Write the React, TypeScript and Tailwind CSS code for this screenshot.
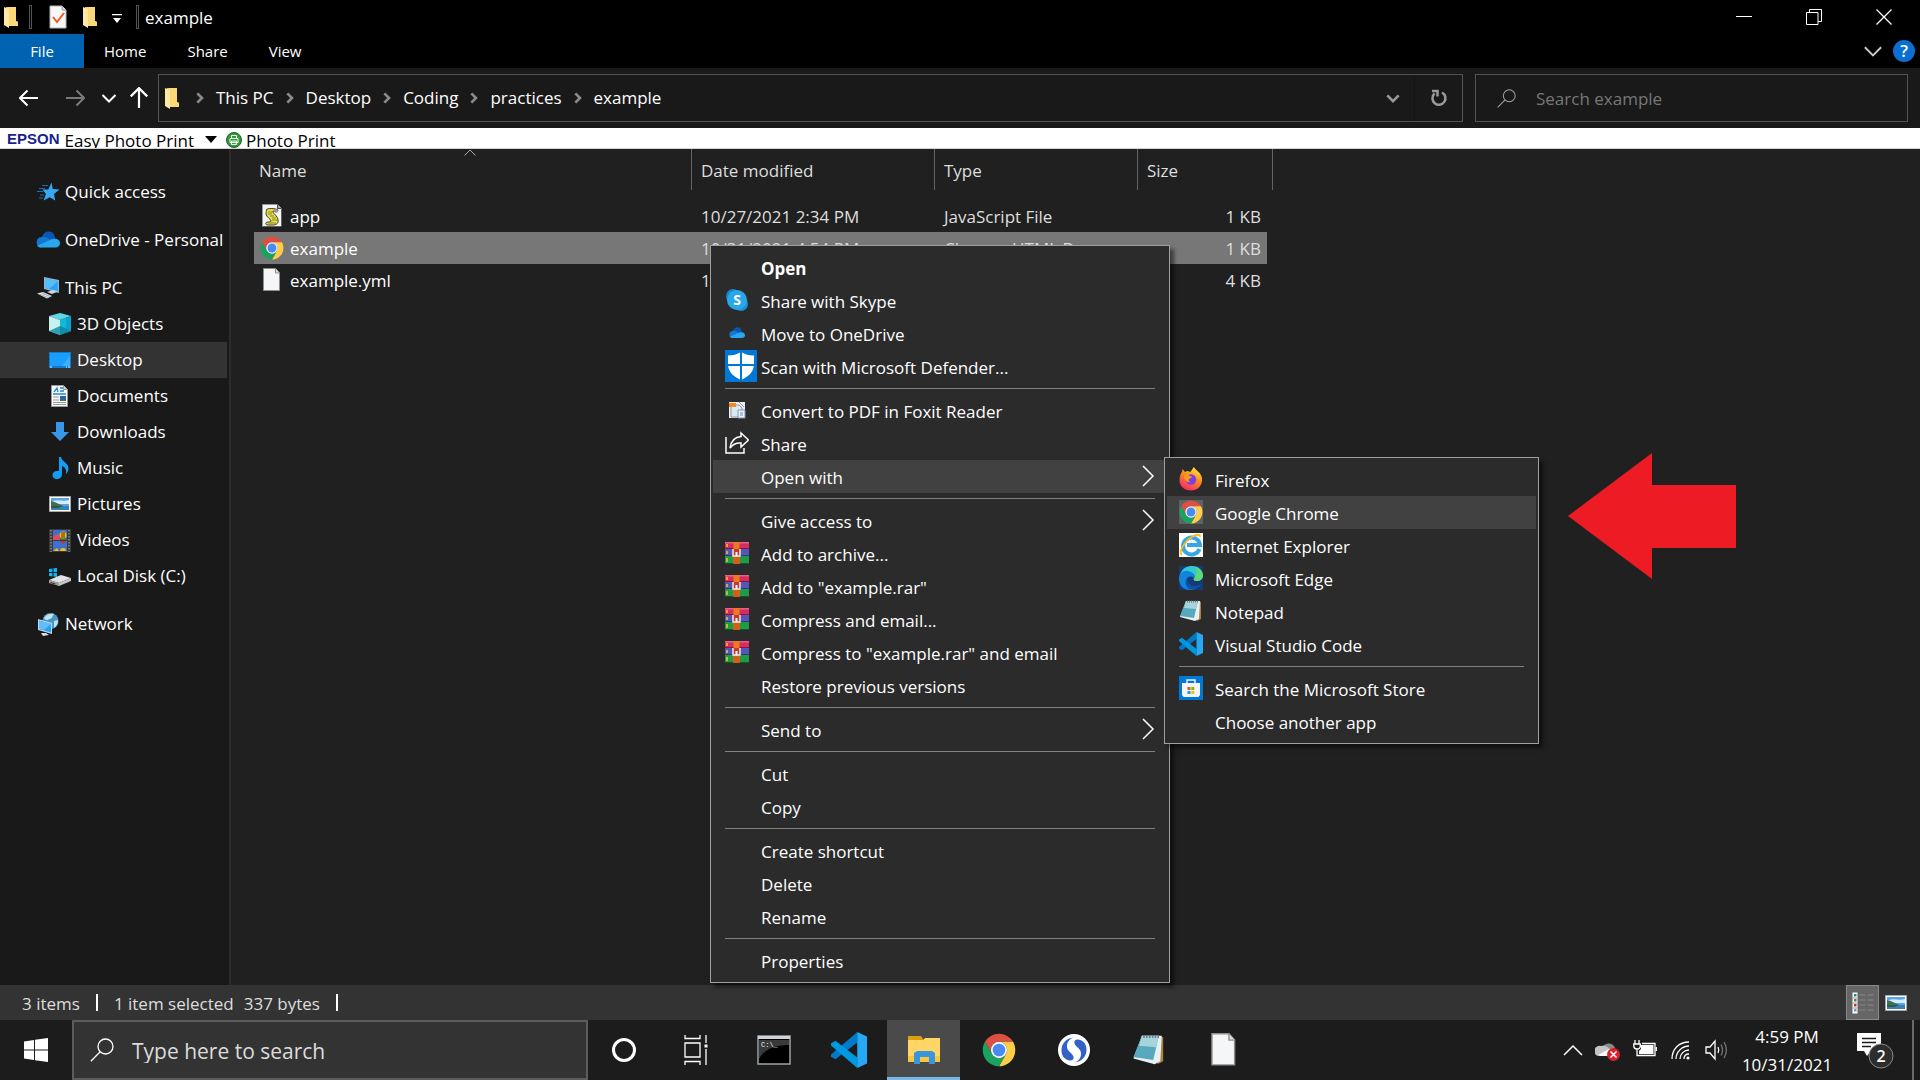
import { ReactNode } from 'react'

type IconProps = { className?: string }

// ---------- Icons ----------

const FolderThin = ({ className = 'w-4 h-6' }: IconProps) => (
  <svg viewBox="0 0 16 24" className={className}>
    <path d="M3 2h10v14l2 1v4H5z" fill="#f3c65b" />
    <path d="M5 2h8v14l2 1v4H5z" fill="#fbd877" />
    <path d="M1 2l5 2v19l-5-3z" fill="#ffe9a3" />
  </svg>
)

const CheckDoc = () => (
  <svg viewBox="0 0 18 24" className="w-[18px] h-6">
    <path d="M1 1h12l4 4v18H1z" fill="#f7f7f7" stroke="#b5b5b5" />
    <path d="M13 1v4h4" fill="#ddd" stroke="#999" />
    <path d="M4 12l4 5 7-9" fill="none" stroke="#f0591a" strokeWidth="2" />
  </svg>
)

const Chevron = ({ className = 'w-3 h-3' }: IconProps) => (
  <svg viewBox="0 0 12 12" className={className} fill="none" stroke="currentColor">
    <path d="M4 2.500L7.500 6 4 9.500" />
  </svg>
)

const ChevronDown = ({ className = 'w-4 h-4' }: IconProps) => (
  <svg viewBox="0 0 16 16" className={className} fill="none" stroke="currentColor">
    <path d="M1.500 5l6.500 6.500L14.500 5" />
  </svg>
)

const Magnifier = ({ className = 'w-6 h-6' }: IconProps) => (
  <svg viewBox="0 0 24 24" className={className} fill="none" stroke="currentColor" strokeWidth="1.300">
    <circle cx="15.500" cy="8.500" r="7.500" />
    <path d="M10.200 13.800L.8 23.200" />
  </svg>
)

const Arrow = ({ className }: IconProps) => (
  <svg viewBox="0 0 20 20" className={className} fill="none" stroke="currentColor" strokeWidth="2">
    <path d="M1 10h18M8.500 2.500L1 10l7.500 7.500" />
  </svg>
)

const Printer = () => (
  <svg viewBox="0 0 16 16" className="w-4 h-4">
    <circle cx="8" cy="8" r="7.500" fill="#2f9b3a" stroke="#1d5f26" />
    <path d="M5.500 6V3.500h5V6M4 6.500h8v4h-8zM5.500 9h5v3.500h-5z" fill="none" stroke="#fff" />
  </svg>
)

const Star = () => (
  <svg viewBox="0 0 24 24" className="w-6 h-6">
    <path d="M6 5.500h6M3 8.500h6M1 11.500h6M4 15h4M3 18h4" stroke="#1b6fb5" />
    <path d="M15.500 2.500l1.200 6.500 6.800.5-5.500 4.500 1.200 6.500-5.500-3.200-6.200 3.200 2.500-6.500-3.500-4.500h5.800z" fill="#35a9f4" />
  </svg>
)

const OneDrive = ({ className = 'w-6 h-6' }: IconProps) => (
  <svg viewBox="0 0 24 24" className={className}>
    <path d="M6 9a6.500 6.500 0 0 1 13 2l-5 4z" fill="#0a57b2" />
    <path d="M5.500 9c3-1 5.500.3 7 1.500l6 4L5 19.500A5.300 5.300 0 0 1 5.500 9z" fill="#0f78d4" />
    <path d="M18.500 10.800c3.500 0 5.500 2 5.500 4.500S22 19.500 19.500 19.500H5c-1.600 0-3-.8-3.900-1.800L13 12.500c1.500-1 3.500-1.700 5.500-1.700z" fill="#29a7ea" />
  </svg>
)

const ThisPC = () => (
  <svg viewBox="0 0 24 24" className="w-6 h-6">
    <path d="M8 1l15 3v13L8 13z" fill="#8fb8cf" />
    <path d="M9 2.500l13 2.500v10.500L9 12z" fill="#2fa4f5" />
    <path d="M9 2.500l13 2.500-9 8L9 12z" fill="#58bcfa" />
    <path d="M11 16l6-2 5 1.500-6 2.500z" fill="#cfd6da" />
    <path d="M1 17.500l6-1.500 9 4-5 2.500z" fill="#dfe5e8" />
    <path d="M3 18l9 3.500M6 17l8 3.500" stroke="#87939b" strokeWidth=".7" />
  </svg>
)

const Cube = () => (
  <svg viewBox="0 0 24 24" className="w-6 h-6">
    <path d="M1 4l11-3 11 3-11 4z" fill="#5fd6e4" />
    <path d="M1 4l11 4v15L1 19z" fill="#c8f2f1" />
    <path d="M23 4L12 8v15l11-4z" fill="#0ea0cf" />
    <path d="M1 19l11-5 11 5-11 4z" fill="#0c8ba0" opacity=".8" />
    <path d="M12 8l6-2v10l-6-2z" fill="#17b8d6" />
  </svg>
)

const Monitor = () => (
  <svg viewBox="0 0 24 24" className="w-6 h-6">
    <path d="M1 4h22v16H1z" fill="#0f7ccc" />
    <path d="M2 5h20v13H2z" fill="#1a9dfb" />
    <path d="M14 18l8-10v10z" fill="#3fb0ff" />
    <path d="M2 19h2M18 19h1M20 19h2" stroke="#dff1ff" />
  </svg>
)

const DocIcon = () => (
  <svg viewBox="0 0 24 24" className="w-6 h-6">
    <path d="M3.500 1.500h12l4 4v17h-16z" fill="#fafafa" stroke="#999" />
    <path d="M15.500 1.500v4h4" fill="#ccc" stroke="#999" />
    <path d="M6 8l3-4 1 4M5 10h13M12 4h3M12 7h4" stroke="#2189d4" strokeWidth="1.300" fill="none" />
    <path d="M5 13h6M5 16h6M5 18.500h13M5 20.500h13" stroke="#999" />
    <path d="M12 12h6v5h-6z" fill="#2c64a8" />
    <path d="M12 17l3-2 3 1v1z" fill="#3c7d4a" />
  </svg>
)

const DownIcon = () => (
  <svg viewBox="0 0 24 24" className="w-6 h-6">
    <path d="M8 2h8v10h5l-9 9-9-9h5z" fill="#3a97e8" />
  </svg>
)

const MusicIcon = () => (
  <svg viewBox="0 0 24 24" className="w-6 h-6">
    <path d="M11 1h2c.5 4 7.500 6 7.500 11 0 3-1 4-2.500 6 .8-4-1-7-4-8v8c0 3-2 5-5 5s-4.500-1.500-4.500-4c0-3 3-4.500 6.500-4z" fill="#139df5" />
  </svg>
)

const PictureIcon = ({ className = 'w-6 h-6' }: IconProps) => (
  <svg viewBox="0 0 24 24" className={className}>
    <path d="M1.500 4.500h21v15h-21z" fill="#fff" stroke="#a9a9a9" />
    <path d="M3 6h18v12H3z" fill="#5aa5ea" />
    <path d="M5 9c5-2 10 1 16-1v4H3v-2z" fill="#d5ecfb" />
    <path d="M3 9c5 1 9 4 13 5H3z" fill="#3d7052" />
    <path d="M3 14h18v4H3z" fill="#3b7fb5" />
    <path d="M3 14h12l-5 2H3z" fill="#2d5a49" />
  </svg>
)

const VideoIcon = () => (
  <svg viewBox="0 0 24 24" className="w-6 h-6">
    <path d="M1 1h22v23H1z" fill="#3a3a3a" />
    <path d="M3 2v22M21 2v22" stroke="#8b8b8b" strokeWidth="1.500" strokeDasharray="1.500 1.500" />
    <path d="M5 2h14v10H5zM5 13h14v10H5z" fill="#3e6fd2" />
    <path d="M5 8l5-2 3 5v1H5z" fill="#de4b5a" />
    <path d="M12 10h7v2h-7z" fill="#2e7b3b" />
    <circle cx="15" cy="7" r="3.500" fill="#f0bd1b" />
    <path d="M14 4v6M16 4v6" stroke="#5c2b12" />
    <path d="M12 13h6l-3 3z" fill="#c9302c" />
    <path d="M5 23l4-3 2 3zM12 23a3 3 0 0 1 6 0z" fill="#f0bd1b" />
  </svg>
)

const DiskIcon = () => (
  <svg viewBox="0 0 24 24" className="w-6 h-6">
    <path d="M1 5l3.500-.5V8H1zM5.500 4.300L9 4v4H5.500zM1 9h3.500v3.500L1 12zM5.500 9H9v4l-3.500-.4z" fill="#13b3f5" />
    <path d="M1 16l12-5 10 3-12 5z" fill="#e3e3e6" />
    <path d="M1 16l10 3v3L1 19z" fill="#a5a5a9" />
    <path d="M23 14l-12 5v3l12-5z" fill="#c6c6ca" />
    <path d="M2.500 18l5 1.500v1l-5-1.500z" fill="#2d2d2d" />
    <path d="M8 20l1.500.4" stroke="#3bd14b" strokeWidth="1.500" />
  </svg>
)

const NetworkIcon = () => (
  <svg viewBox="0 0 24 24" className="w-6 h-6">
    <circle cx="14.500" cy="9" r="8" fill="#4b95bd" />
    <path d="M8 6c2-4 7-5 10-4-2 2-1 4-4 5s-4 2-6-1zM18 9l4-1c0 4-1 6-4 8z" fill="#bfe3f0" />
    <path d="M2 7l14 4v11L2 18z" fill="#b6dcf2" />
    <path d="M3 8.500l12 3.500v8.500L3 17z" fill="#2d9ff0" />
    <path d="M3 8.500l12 3.500-7 6-5-1z" fill="#63bdfa" />
    <path d="M5 21l5 0 3 2-6 1z" fill="#d7dcdf" />
  </svg>
)

const ScriptIcon = () => (
  <svg viewBox="0 0 24 24" className="w-6 h-6">
    <path d="M2.500.5h15l4 4v18h-19z" fill="#f6f6f6" stroke="#999" />
    <path d="M17.500.5v4h4" fill="#aaa" stroke="#444" />
    <path d="M22 5v18H3" fill="none" stroke="#222" />
    <path
      d="M6 6c1-2 9-2 12 0 0 2-2 2-5 1-1 2 5 5 5 9 1 4-3 5-5 5H8c-3 0-3-3 0-3 2 0 3 0 3-1 0-2-5-4-5-7 0-2 1-3 0-4z"
      fill="#e6df4a"
      stroke="#3c3a1d"
    />
    <path d="M8 8h4M8 10h4M10 12h4M12 14h4M12 16h5M8 19h8" stroke="#8b872f" />
    <path d="M14 5l4 1-1 3-3-1z" fill="#999" />
  </svg>
)

const BlankFile = ({ className = 'w-6 h-6' }: IconProps) => (
  <svg viewBox="0 0 24 24" className={className}>
    <path d="M3.500.5h12l4 4.500v17.500h-16z" fill="#f5f6f7" stroke="#8e8e8e" />
    <path d="M15.500.5V5h4" fill="#ddd" stroke="#8e8e8e" />
  </svg>
)

const Chrome = ({ className = 'w-6 h-6' }: IconProps) => (
  <svg viewBox="1 1 46 46" className={className}>
    <path d="M24 13H43.050A22 22 0 0 0 4.950 13L14.470 29.500A11 11 0 0 1 24 13Z" fill="#dd4f43" />
    <path d="M33.530 29.500L24 46A22 22 0 0 0 43.050 13H24A11 11 0 0 1 33.530 29.500Z" fill="#ffcd46" />
    <path d="M14.470 29.500L4.950 13A22 22 0 0 0 24 46L33.530 29.500A11 11 0 0 1 14.470 29.500Z" fill="#1aa260" />
    <circle cx="24" cy="24" r="11" fill="#f4f4f4" />
    <circle cx="24" cy="24" r="8.500" fill="#4a8af4" />
  </svg>
)

const Skype = () => (
  <svg viewBox="0 0 24 24" className="w-6 h-6">
    <circle cx="8" cy="8" r="7" fill="#1686d0" />
    <circle cx="16" cy="16" r="7" fill="#1a8fd8" />
    <circle cx="12" cy="12" r="10" fill="#28a8ea" />
    <text x="12" y="17" textAnchor="middle" fontSize="14" fontWeight="700" fill="#fff">S</text>
  </svg>
)

const Defender = () => (
  <svg viewBox="0 0 32 32" className="w-8 h-8">
    <path d="M0 0h32v32H0z" fill="#0078d7" />
    <path d="M16 2c4 2.500 8 3.500 13 3.500V14c0 8-6 13-13 16C9 27 3 22 3 14V5.500C8 5.500 12 4.500 16 2z" fill="#fff" />
    <path d="M16 2v28M3 15h26" stroke="#0078d7" strokeWidth="2" />
  </svg>
)

const Foxit = () => (
  <svg viewBox="0 0 24 24" className="w-6 h-6">
    <path d="M4 4h16v16H4z" fill="#e9eef4" />
    <path d="M6 7h8l3 3v9H6z" fill="#dbe9f7" stroke="#8b96a3" />
    <path d="M4 5h7v4H4z" fill="#f08a1c" />
    <path d="M13 12h7v8h-7z" fill="#eaf2fb" stroke="#8796a8" />
    <path d="M15 15h3M15 17h3" stroke="#5f8fc4" />
    <path d="M14 4l5 5" stroke="#8b96a3" />
  </svg>
)

const ShareIcon = () => (
  <svg viewBox="0 0 24 24" className="w-6 h-6" fill="none" stroke="#fff" strokeWidth="1.500">
    <path d="M1 6v16h18v-5" />
    <path d="M16 2l7.500 7L16 16v-4c-5-.5-8 1-11 5 1-7 5-11 11-11.500z" />
  </svg>
)

const WinRar = () => (
  <svg viewBox="0 0 24 24" className="w-6 h-6">
    <path d="M0 1h24v7H0z" fill="#d62d5e" />
    <path d="M0 1h24v1.500H0z" fill="#ea5f86" />
    <path d="M0 7h24v1H0z" fill="#8c1439" />
    <path d="M0 8h24v7H0z" fill="#5357b8" />
    <path d="M0 14h24v1H0z" fill="#333686" />
    <path d="M0 15h24v8H0z" fill="#1f9b46" />
    <path d="M0 22h24v1H0z" fill="#0f5a26" />
    <path d="M2 3v3M2 10v3M2 17v4" stroke="#f3c62c" strokeWidth="1.500" />
    <path d="M8.500 1h6v22h-6z" fill="#ec7a1f" />
    <path d="M8.500 16h6v7h-6z" fill="#d85c14" />
    <path d="M8 8v7h7V8" fill="#c63a2a" stroke="#e9e9e9" strokeWidth="1.500" />
    <path d="M10.500 11h2v4h-2z" fill="#fff" />
  </svg>
)

const Firefox = () => (
  <svg viewBox="0 0 24 24" className="w-6 h-6">
    <defs>
      <linearGradient id="ff" x1="0.800" y1="0" x2="0.300" y2="1">
        <stop offset="0" stopColor="#fff044" />
        <stop offset=".45" stopColor="#ff8c1a" />
        <stop offset="1" stopColor="#f5286a" />
      </linearGradient>
    </defs>
    <path d="M15 0c1 3 7 5 8 11 .8 7-4 12.500-11 12.500S.5 19 .5 13C.5 9 2 6 3 5l.5-3L6 5c1-.7 2-1 3-1 1 0 1 1 2 1s2-3 4-5z" fill="url(#ff)" />
    <circle cx="12" cy="12.500" r="5.200" fill="#7a3fe0" />
    <path d="M5 8c2-1 4-.5 5 .5s3 .5 3 1.500-2 1-3 2 0 3 2 3c-4 1-7-2-7-7z" fill="#ff9a1f" />
  </svg>
)

const InternetExplorer = () => (
  <svg viewBox="0 0 24 24" className="w-6 h-6">
    <path d="M0 0h24v24H0z" fill="#fff" />
    <path d="M20.500 16a8.500 8.500 0 1 1 .5-4H8" fill="none" stroke="#35a7e6" strokeWidth="4" />
    <path d="M3 22c-4-3 3-14 10-18 5-3 8-3 8 0" fill="none" stroke="#f4bd22" strokeWidth="1.800" />
  </svg>
)

const Edge = () => (
  <svg viewBox="0 0 24 24" className="w-6 h-6">
    <path d="M0 0h24v24H0z" fill="#163a78" />
    <path d="M1 9C3 2 8 0 13 0c7 0 11 5 11 9.500 0 3.500-3 5.500-6 5.500s-4-1-3-2.500 1-5-4-6S3 6 1 9z" fill="#35c6d6" />
    <path d="M16 1c5 1 8 5 8 8.500 0 3.500-3 5.500-6 5.500s-4-1-3-2.500c3-3 4-7 1-11.500z" fill="#5cdb72" />
    <path d="M0 12c0-5 5-8 9-7 5 .8 7 4 5.500 7C10 8 6 13 9 18c2 3 6 4 9 3.500-2 2-5 2.500-7 2.500C4 24 0 19 0 12z" fill="#1184dc" />
    <path d="M9.500 10c-3 4 0 9 5 10 4 .5 7-1.500 8-2.500-2 4-6 6.500-11 6C6 22 5 14 9.500 10z" fill="#0d52a0" />
  </svg>
)

const Notepad = ({ className = 'w-6 h-6' }: IconProps) => (
  <svg viewBox="0 0 24 24" className={className}>
    <path d="M19 2l3 1v17l-4 2z" fill="#a9823c" />
    <path d="M7 2h14l-1 18-4 2-15-4z" fill="#e7f1f3" />
    <path d="M7 2h12l-4 17L1 17z" fill="#58a9bd" />
    <path d="M7 2h12l-2 8-12-1z" fill="#a6d4dd" />
    <path d="M8 2.500h12" stroke="#6e777a" strokeWidth="2" strokeDasharray="1 1" />
  </svg>
)

const VSCode = ({ className = 'w-6 h-6' }: IconProps) => (
  <svg viewBox="0 0 24 24" className={className}>
    <path d="M17.500 0v7L3 18.200 0 16.500V15z" fill="#0179cb" />
    <path d="M17.500 24v-7L3 5.800 0 7.500V9z" fill="#0098e0" />
    <path d="M17.500 0L24 3v18l-6.500 3z" fill="#26a9f4" />
  </svg>
)

const Store = () => (
  <svg viewBox="0 0 24 24" className="w-6 h-6">
    <path d="M0 0h24v24H0z" fill="#0078d7" />
    <path d="M8 7V4h8v3" fill="none" stroke="#eaf3fb" strokeWidth="1.500" />
    <path d="M3 7h18v12l-1.500 2h-15L3 19z" fill="#f5f5f5" />
    <path d="M8.500 11h3v3h-3z" fill="#f25022" />
    <path d="M12.300 11h3v3h-3z" fill="#7fba00" />
    <path d="M8.500 15h3v3h-3z" fill="#00a4ef" />
    <path d="M12.300 15h3v3h-3z" fill="#ffb900" />
  </svg>
)

const WindowsLogo = () => (
  <svg viewBox="0 0 24 24" className="w-6 h-6">
    <path d="M0 3.400L10 2v9.500H0zM11 1.800L24 0v11.500H11zM0 12.500h10V22L0 20.600zM11 12.500h13V24l-13-1.800z" fill="#fff" />
  </svg>
)

const TaskView = () => (
  <svg viewBox="0 0 24 30" className="w-6 h-[30px]" fill="none" stroke="#fff" strokeWidth="1.300">
    <path d="M1 0v3.500h15V0M1 30v-3.500h15V30M1 8h15v14H1zM22 0v8M22 14v16" />
    <path d="M20.500 9.500h3v3h-3z" fill="#fff" stroke="none" />
  </svg>
)

const Cmd = () => (
  <svg viewBox="0 0 34 30" className="w-[34px] h-[30px]">
    <path d="M1 1h32v28H1z" fill="#000" stroke="#9aa3a8" strokeWidth="1.500" />
    <path d="M1 1h32v3H1z" fill="#cdd5d9" />
    <path d="M2 5h30v5C15 10 6 16 2 24z" fill="#3a3a3a" />
    <text x="4" y="12" fontSize="7" fill="#eee" fontFamily="Liberation Mono">C:\_</text>
  </svg>
)

const Explorer = () => (
  <svg viewBox="0 0 34 28" className="w-[34px] h-7">
    <path d="M1 0h13l2 3v3H1z" fill="#dd9f10" />
    <path d="M1 4h15l2-2h15v24H1z" fill="#ffd565" />
    <path d="M1 20h32v6H1z" fill="#f9c640" />
    <path d="M7 28V17l3-2h15l3 2v11h-6v-7h-9v7z" fill="#3a95df" />
  </svg>
)

const SApp = () => (
  <svg viewBox="0 0 34 34" className="w-[34px] h-[34px]">
    <circle cx="17" cy="17" r="16" fill="#fff" />
    <path d="M17 4.500C9 5 4.500 11 4.500 17c0 5 2 8 5 9.500 4 2 8 1 7-3-1.500-4-7-5-6.500-11 .3-4 3-7 7-8z" fill="#3461c9" />
    <path d="M17 29.500c8-.5 12.500-6.500 12.500-12.500 0-5-2-8-5-9.500-4-2-8-1-7 3 1.500 4 7 5 6.500 11-.3 4-3 7-7 8z" fill="#3461c9" />
  </svg>
)

const TrayCloud = () => (
  <svg viewBox="0 0 26 24" className="w-[26px] h-6">
    <path d="M8 8a7 7 0 0 1 12 2l-8 5z" fill="#8a8a8a" />
    <path d="M6 8c5-1 7 2 12 5L3 18a5.200 5.200 0 0 1 3-10z" fill="#c4c4c4" />
    <path d="M3 17l9-5c4-2 10 1 10 6H5z" fill="#fff" />
    <circle cx="18.500" cy="16.500" r="6.500" fill="#d8232f" />
    <path d="M15.500 13.500l6 6M21.500 13.500l-6 6" stroke="#fff" strokeWidth="1.500" />
  </svg>
)

const Battery = () => (
  <svg viewBox="0 0 24 24" className="w-6 h-6" fill="none" stroke="#fff" strokeWidth="1.300">
    <path d="M9 5.500h13v12H4v-6" />
    <path d="M8 7h12.500v9H6v-3l2-2z" fill="#fff" stroke="none" />
    <path d="M23.300 9v4M2 2v4M6 2v4M.8 6h6.500v2c0 2-1 3-3.300 3S.8 10 .8 8z" />
  </svg>
)

const Wifi = () => (
  <svg viewBox="0 0 24 24" className="w-6 h-6" fill="none" stroke="#fff" strokeWidth="1.300">
    <path d="M3 21C3 11 10 4 20 4M7 21c0-7 6-13 13-13M11 21c0-5 4-9 9-9M15 21c0-3 2-5 5-5" />
    <circle cx="19" cy="20" r="1.600" fill="#fff" stroke="none" />
  </svg>
)

const Volume = () => (
  <svg viewBox="0 0 24 24" className="w-6 h-6" fill="none" stroke="#fff" strokeWidth="1.300">
    <path d="M1 9h4l5-6v18l-5-6H1z" />
    <path d="M13 9c1 2 1 4 0 6" />
    <path d="M16 6.500c2 3.500 2 7.500 0 11M19 4c3 5 3 11 0 16" stroke="#777" />
  </svg>
)

const Notification = () => (
  <svg viewBox="0 0 38 38" className="w-[38px] h-[38px]">
    <path d="M0 2h24v18H14l-4 5-3-5H0z" fill="#fff" />
    <path d="M5 7.500h14M5 11.500h14M5 15.500h9" stroke="#1b1b1b" strokeWidth="1.300" />
    <circle cx="24" cy="25" r="12" fill="#2d2d2d" stroke="#8a8a8a" />
    <text x="24" y="31" textAnchor="middle" fontSize="16" fontWeight="600" fill="#fff">2</text>
  </svg>
)

// ---------- Data ----------

const tabs = ['Home', 'Share', 'View']
const crumbs = ['This PC', 'Desktop', 'Coding', 'practices', 'example']

const places = [
  { icon: Cube, label: '3D Objects' },
  { icon: Monitor, label: 'Desktop', active: true },
  { icon: DocIcon, label: 'Documents' },
  { icon: DownIcon, label: 'Downloads' },
  { icon: MusicIcon, label: 'Music' },
  { icon: PictureIcon, label: 'Pictures' },
  { icon: VideoIcon, label: 'Videos' },
  { icon: DiskIcon, label: 'Local Disk (C:)' },
]

const files = [
  { icon: ScriptIcon, name: 'app', date: '10/27/2021 2:34 PM', type: 'JavaScript File', size: '1 KB' },
  { icon: Chrome, name: 'example', date: '10/31/2021 4:54 PM', type: 'Chrome HTML Do...', size: '1 KB', selected: true },
  { icon: BlankFile, name: 'example.yml', date: '10/31/2021 4:54 PM', type: 'YML File', size: '4 KB' },
]

type Entry = {
  label: string
  icon?: (props: IconProps) => ReactNode
  bold?: boolean
  active?: boolean
  submenu?: boolean
}

const contextMenu: Entry[][] = [
  [
    { label: 'Open', bold: true },
    { label: 'Share with Skype', icon: Skype },
    { label: 'Move to OneDrive', icon: () => <OneDrive className="w-4 h-4 mx-1" /> },
    { label: 'Scan with Microsoft Defender...', icon: Defender },
  ],
  [
    { label: 'Convert to PDF in Foxit Reader', icon: Foxit },
    { label: 'Share', icon: ShareIcon },
    { label: 'Open with', active: true, submenu: true },
  ],
  [
    { label: 'Give access to', submenu: true },
    { label: 'Add to archive...', icon: WinRar },
    { label: 'Add to "example.rar"', icon: WinRar },
    { label: 'Compress and email...', icon: WinRar },
    { label: 'Compress to "example.rar" and email', icon: WinRar },
    { label: 'Restore previous versions' },
  ],
  [{ label: 'Send to', submenu: true }],
  [{ label: 'Cut' }, { label: 'Copy' }],
  [{ label: 'Create shortcut' }, { label: 'Delete' }, { label: 'Rename' }],
  [{ label: 'Properties' }],
]

const openWithMenu: Entry[][] = [
  [
    { label: 'Firefox', icon: Firefox },
    { label: 'Google Chrome', icon: () => <Chrome className="w-6 h-6 bg-[#5f6368]" />, active: true },
    { label: 'Internet Explorer', icon: InternetExplorer },
    { label: 'Microsoft Edge', icon: Edge },
    { label: 'Notepad', icon: Notepad },
    { label: 'Visual Studio Code', icon: VSCode },
  ],
  [{ label: 'Search the Microsoft Store', icon: Store }, { label: 'Choose another app' }],
]

const pinned = [
  { name: 'Command Prompt', icon: <Cmd /> },
  { name: 'Visual Studio Code', icon: <VSCode className="w-9 h-9" /> },
  { name: 'File Explorer', icon: <Explorer />, active: true },
  { name: 'Google Chrome', icon: <Chrome className="w-[34px] h-[34px]" /> },
  { name: 'Simplenote', icon: <SApp /> },
  { name: 'Notepad', icon: <Notepad className="w-[34px] h-[34px]" /> },
  { name: 'Document', icon: <BlankFile className="w-[34px] h-[34px]" /> },
]

// ---------- Parts ----------

const Menu = ({ groups, className }: { groups: Entry[][], className: string }) => (
  <div role="menu" className={`absolute bg-[#2b2b2b] border border-[#a0a0a0] py-[5px] shadow-[4px_4px_4px_rgba(0,0,0,0.5)] ${className}`}>
    {groups.map((group, i) => (
      <div key={i}>
        {i > 0 && <hr className="h-px my-[5px] mx-[14px] border-0 bg-[#808080]" />}
        {group.map((item) => {
          const Icon = item.icon
          return (
            <button
              key={item.label}
              role="menuitem"
              className={`flex items-center w-full h-[33px] px-[2px] ${item.bold ? 'font-bold' : ''}`}
            >
              <span className={`flex items-center grow h-full pl-3 pr-3 ${item.active ? 'bg-[#414141]' : ''}`}>
                <span className="shrink-0 w-9 pb-[2px]">{Icon && <Icon />}</span>
                <span className="pt-[2px] whitespace-nowrap">{item.label}</span>
                {item.submenu && (
                  <svg viewBox="0 0 14 22" className="w-[14px] h-[22px] mb-[2px] ml-auto" fill="none" stroke="#fff" strokeWidth="1.500">
                    <path d="M2 1l10 10L2 21" />
                  </svg>
                )}
              </span>
            </button>
          )
        })}
      </div>
    ))}
  </div>
)

const SideItem = ({ icon: Icon, label, nested, active }: {
  icon: (props: IconProps) => ReactNode
  label: string
  nested?: boolean
  active?: boolean
}) => (
  <a
    href="#"
    className={`flex items-center h-9 gap-[5px] whitespace-nowrap mr-[2px] ${nested ? 'pl-12' : 'pl-9'} ${active ? 'bg-[#333]' : ''}`}
  >
    <span className="shrink-0"><Icon /></span>
    {label}
  </a>
)

export default function App() {
  return (
    <div className="relative flex flex-col min-h-screen overflow-hidden bg-black text-white text-[17px] leading-6 font-['Open_Sans',sans-serif]">
      {/* Title bar */}
      <header className="flex items-center h-[34px] pl-[3px]">
        <FolderThin />
        <span className="w-[3px] h-6 ml-[10px] border border-[#555]" />
        <div className="flex items-center ml-[17px] gap-[15px]">
          <CheckDoc />
          <FolderThin />
        </div>
        <svg viewBox="0 0 10 10" className="w-[10px] h-[10px] ml-[14px] mt-1" fill="#fff">
          <path d="M0 0h10v1.300H0zM1 4h8L5 9z" />
        </svg>
        <span className="w-[3px] h-6 ml-[14px] border border-[#555]" />
        <h1 className="ml-[6px] pt-[2px]">example</h1>
        <div className="flex items-center ml-auto pr-7 gap-[54px]">
          <button aria-label="Minimize">
            <svg viewBox="0 0 16 16" className="w-4 h-4"><path d="M0 7.500h16" stroke="#fff" /></svg>
          </button>
          <button aria-label="Restore">
            <svg viewBox="0 0 16 16" className="w-4 h-4" fill="none" stroke="#fff">
              <path d="M.5 3.500h11.500v12H.5zM3.500 3.500v-3h12v12H12" />
            </svg>
          </button>
          <button aria-label="Close">
            <svg viewBox="0 0 16 16" className="w-4 h-4"><path d="M.5.5l15 15M15.500.5l-15 15" stroke="#fff" strokeWidth="1.300" /></svg>
          </button>
        </div>
      </header>

      {/* Ribbon tabs */}
      <div className="flex items-center h-[34px] text-[15px]">
        <button className="w-[84px] h-full bg-[#0063b1]">File</button>
        <div className="flex items-center ml-5 gap-[41px]">
          {tabs.map((tab) => (
            <button key={tab}>{tab}</button>
          ))}
        </div>
        <div className="flex items-center ml-auto pr-[5px] gap-[10px]">
          <ChevronDown className="w-5 h-5 stroke-[1.500] text-[#ccc]" />
          <button className="size-[22px] rounded-full bg-[#0a6fd0] text-[17px] font-semibold leading-[22px]">?</button>
        </div>
      </div>

      {/* Address bar */}
      <div className="flex items-center h-[60px] pl-[19px] pr-3 bg-[#191919]">
        <div className="flex items-center shrink-0">
          <button aria-label="Back"><Arrow className="w-5 h-5" /></button>
          <button aria-label="Forward" className="ml-[26px] text-[#7a7a7a]"><Arrow className="w-5 h-5 rotate-180" /></button>
          <button aria-label="Recent" className="ml-4"><ChevronDown className="w-4 h-4 stroke-2" /></button>
          <button aria-label="Up" className="mx-[11px]"><Arrow className="w-[22px] h-[22px] rotate-90" /></button>
        </div>
        <nav className="flex items-center grow h-12 border border-[#535353] -ml-[3px] pl-[5px]">
          <FolderThin />
          {crumbs.map((crumb, i) => (
            <div key={crumb} className="flex items-center">
              <Chevron className={`w-4 h-4 stroke-2 text-[#8a8a8a] mr-2 ${i === 0 ? 'ml-3' : 'ml-2'}`} />
              <a href="#">{crumb}</a>
            </div>
          ))}
          <button aria-label="Previous locations" className="ml-auto mr-[14px] text-[#999]"><ChevronDown className="w-[14px] h-[14px] stroke-3" /></button>
          <button aria-label="Refresh" className="flex items-center justify-center w-12 h-full text-[#999] border-l border-[#141414]">
            <svg viewBox="0 0 18 18" className="w-[18px] h-[18px]" fill="none" stroke="currentColor" strokeWidth="2.500">
              <path d="M12 3.500A6.500 6.500 0 1 1 4.500 4.500" />
              <path d="M2 2h5.500v5.500" />
            </svg>
          </button>
        </nav>
        <label htmlFor="folder-search" className="flex items-center w-[433px] h-12 ml-3 border border-[#535353] pl-[21px] gap-5 text-[#a0a0a0]">
          <Magnifier className="w-[19px] h-[19px]" />
          <input id="folder-search" type="text" placeholder="Search example" className="grow pt-[2px] bg-transparent outline-none placeholder:text-[#777]" />
        </label>
      </div>

      {/* Epson toolbar */}
      <div className="flex items-start h-[21px] overflow-hidden bg-white border-b border-[#d5d5d5] text-black pl-[7px]">
        <b className="text-[15px] leading-[21px] text-[#1a1f8c] font-['Liberation_Sans',sans-serif]">EPSON</b>
        <button className="ml-[5px] leading-[26px]">Easy Photo Print</button>
        <svg viewBox="0 0 12 8" className="w-3 h-2 ml-[11px] mt-2"><path d="M0 0h12L6 7z" /></svg>
        <button className="flex items-start ml-[9px] gap-1 leading-[26px]">
          <span className="mt-1"><Printer /></span>
          Photo Print
        </button>
      </div>

      <main className="flex grow bg-[#202020]">
        {/* Navigation pane */}
        <aside className="shrink-0 w-[231px] pt-[25px] bg-[#191919] border-r-2 border-[#2b2b2b] overflow-hidden">
          <SideItem icon={Star} label="Quick access" />
          <div className="mt-3">
            <SideItem icon={OneDrive} label="OneDrive - Personal" />
          </div>
          <div className="mt-3">
            <SideItem icon={ThisPC} label="This PC" />
            {places.map((place) => (
              <SideItem key={place.label} nested {...place} />
            ))}
          </div>
          <div className="mt-3">
            <SideItem icon={NetworkIcon} label="Network" />
          </div>
        </aside>

        {/* File list */}
        <section className="grow pl-[23px]">
          <table className="table-fixed w-[1019px] text-left">
            <colgroup>
              <col />
              <col className="w-[243px]" />
              <col className="w-[203px]" />
              <col className="w-[129px]" />
              <col className="w-[6px]" />
            </colgroup>
            <thead className="text-[#dedede]">
              <tr>
                {['Name', 'Date modified', 'Type', 'Size'].map((head, i) => (
                  <th key={head} colSpan={i === 3 ? 2 : 1} className="p-0 pb-[10px] font-normal">
                    <div className={`relative flex items-center h-[41px] border-r border-[#636363] pt-[2px] ${i === 0 ? 'pl-[5px]' : 'pl-[9px]'}`}>
                      {head}
                      {i === 0 && (
                        <svg viewBox="0 0 12 7" className="absolute top-0 left-1/2 w-3 h-[7px] -translate-x-2" fill="none" stroke="#aaa">
                          <path d="M.5 6.500L6 1l5.500 5.500" />
                        </svg>
                      )}
                    </div>
                  </th>
                ))}
              </tr>
            </thead>
            <tbody>
              {files.map(({ icon: Icon, name, date, type, size, selected }) => {
                const cell = `h-8 p-0 pt-[2px] whitespace-nowrap overflow-hidden ${selected ? 'bg-[#777]' : ''}`
                return (
                  <tr key={name} className="text-[#dedede]">
                    <td className={`${cell} text-white`}>
                      <div className="flex items-center pl-[6px] gap-[6px]">
                        <span className="shrink-0 pb-[2px]"><Icon /></span>
                        {name}
                      </div>
                    </td>
                    <td className={`${cell} pl-[9px]`}>{date}</td>
                    <td className={`${cell} pl-[9px]`}>{type}</td>
                    <td className={`${cell} pr-[6px] text-right`}>{size}</td>
                    <td className="p-0" />
                  </tr>
                )
              })}
            </tbody>
          </table>
        </section>
      </main>

      {/* Status bar */}
      <footer className="flex items-center h-[35px] pl-[22px] pr-3 bg-[#333] text-[#dedede]">
        <span className="pt-[2px]">3 items</span>
        <span className="w-[2px] h-[17px] mx-4 bg-white" />
        <span className="pt-[2px]">1 item selected</span>
        <span className="ml-[10px] pt-[2px]">337 bytes</span>
        <span className="w-[2px] h-[17px] ml-4 bg-white" />
        <button aria-label="Details view" className="flex items-center justify-center w-[33px] h-full ml-auto bg-[#666] border border-[#8a8a8a]">
          <svg viewBox="0 0 22 22" className="w-[22px] h-[22px]">
            <path d="M.5.5h5v21h-5z" fill="#fff" />
            <path d="M2 2h2.500v2.500H2z" fill="#2d7d9a" />
            <path d="M2 7h2.500v2.500H2z" fill="#5b7d3a" />
            <path d="M2 12h2.500v2.500H2z" fill="#b8352c" />
            <path d="M2 17h2.500v2.500H2z" fill="#6d93c7" />
            <path d="M.5 6h5M.5 11h5M.5 16h5" stroke="#999" />
            <path d="M7.500 3h6M15.500 3h6M7.500 8h6M15.500 8h6M7.500 13h6M15.500 13h6M7.500 18h6M15.500 18h6" stroke="#888" />
          </svg>
        </button>
        <button aria-label="Large icons" className="ml-[5px]"><PictureIcon /></button>
      </footer>

      {/* Taskbar */}
      <div className="flex items-center h-[60px] bg-[#1c1c1c]">
        <button aria-label="Start" className="flex justify-center w-[72px]"><WindowsLogo /></button>
        <label htmlFor="taskbar-search" className="flex items-center w-[516px] h-full pl-4 gap-[18px] bg-[#333] border-2 border-[#5c5c5c]">
          <Magnifier />
          <input id="taskbar-search" type="text" placeholder="Type here to search" className="grow pt-[2px] text-[21px] bg-transparent outline-none placeholder:text-[#dcdcdc]" />
        </label>
        <button aria-label="Cortana" className="flex justify-center w-[72px]">
          <span className="size-6 rounded-full border-3 border-white" />
        </button>
        <button aria-label="Task View" className="flex justify-center w-[72px]"><TaskView /></button>
        <div className="flex h-full ml-[5px] gap-[2px]">
          {pinned.map((app) => (
            <button
              key={app.name}
              aria-label={app.name}
              className={`flex items-center justify-center w-[73px] h-full border-y-3 ${
                app.active ? 'bg-[#4a4a4a] border-t-[#4a4a4a] border-b-[#76b9ed]' : 'border-transparent'
              }`}
            >
              {app.icon}
            </button>
          ))}
        </div>
        <div className="flex items-center ml-auto gap-3">
          <svg viewBox="0 0 20 12" className="w-5 h-3" fill="none" stroke="#fff" strokeWidth="1.500">
            <path d="M1 11l9-9 9 9" />
          </svg>
          <TrayCloud />
          <Battery />
          <Wifi />
          <Volume />
        </div>
        <time className="w-[92px] ml-3 pt-[2px] text-center leading-7">
          4:59 PM
          <br />
          10/31/2021
        </time>
        <button aria-label="Notifications" className="ml-6"><Notification /></button>
        <span className="w-[2px] h-full ml-[17px] mr-[6px] bg-[#6b6b6b]" />
      </div>

      <Menu groups={contextMenu} className="left-[710px] top-[245px] w-[460px]" />
      <Menu groups={openWithMenu} className="left-[1164px] top-[457px] w-[375px]" />

      {/* Pointer arrow */}
      <svg viewBox="0 0 168 126" className="absolute left-[1568px] top-[453px] w-[168px] h-[126px]">
        <path d="M0 63L84 0v32h84v63H84v31z" fill="#ed1c24" />
      </svg>
    </div>
  )
}
